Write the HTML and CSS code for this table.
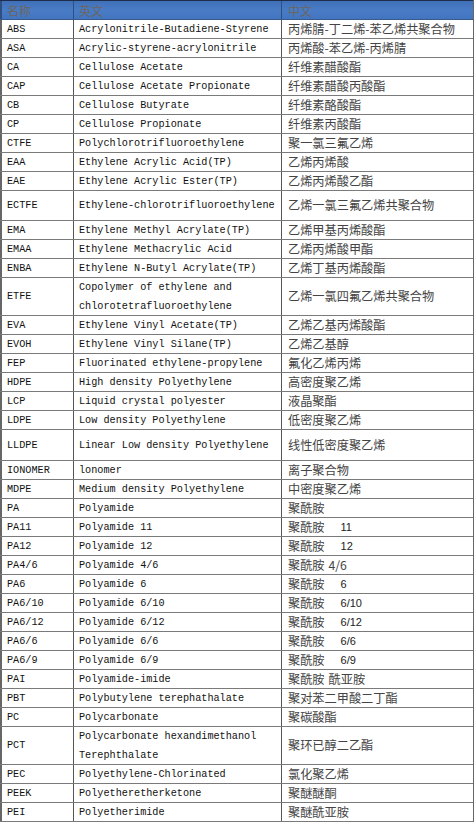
FILE: index.html
```html
<!DOCTYPE html>
<html lang="zh">
<head>
<meta charset="utf-8">
<title>塑料名称对照表</title>
<link rel="stylesheet" href="styles.css">
</head>
<body>
<div class="table">
  <div class="row head"><div class="c c1">名称</div><div class="c c2">英文</div><div class="c c3">中文</div></div>
  <div class="row"><div class="c c1">ABS</div><div class="c c2">Acrylonitrile-Butadiene-Styrene</div><div class="c c3">丙烯腈-丁二烯-苯乙烯共聚合物</div></div>
  <div class="row"><div class="c c1">ASA</div><div class="c c2">Acrylic-styrene-acrylonitrile</div><div class="c c3">丙烯酸-苯乙烯-丙烯腈</div></div>
  <div class="row"><div class="c c1">CA</div><div class="c c2">Cellulose Acetate</div><div class="c c3">纤维素醋酸酯</div></div>
  <div class="row"><div class="c c1">CAP</div><div class="c c2">Cellulose Acetate Propionate</div><div class="c c3">纤维素醋酸丙酸酯</div></div>
  <div class="row"><div class="c c1">CB</div><div class="c c2">Cellulose Butyrate</div><div class="c c3">纤维素酪酸酯</div></div>
  <div class="row"><div class="c c1">CP</div><div class="c c2">Cellulose Propionate</div><div class="c c3">纤维素丙酸酯</div></div>
  <div class="row"><div class="c c1">CTFE</div><div class="c c2">Polychlorotrifluoroethylene</div><div class="c c3">聚一氯三氟乙烯</div></div>
  <div class="row"><div class="c c1">EAA</div><div class="c c2">Ethylene Acrylic Acid(TP)</div><div class="c c3">乙烯丙烯酸</div></div>
  <div class="row"><div class="c c1">EAE</div><div class="c c2">Ethylene Acrylic Ester(TP)</div><div class="c c3">乙烯丙烯酸乙酯</div></div>
  <div class="row h30"><div class="c c1">ECTFE</div><div class="c c2">Ethylene-chlorotrifluoroethylene</div><div class="c c3">乙烯一氯三氟乙烯共聚合物</div></div>
  <div class="row"><div class="c c1">EMA</div><div class="c c2">Ethylene Methyl Acrylate(TP)</div><div class="c c3">乙烯甲基丙烯酸酯</div></div>
  <div class="row"><div class="c c1">EMAA</div><div class="c c2">Ethylene Methacrylic Acid</div><div class="c c3">乙烯丙烯酸甲酯</div></div>
  <div class="row"><div class="c c1">ENBA</div><div class="c c2">Ethylene N-Butyl Acrylate(TP)</div><div class="c c3">乙烯丁基丙烯酸酯</div></div>
  <div class="row h38"><div class="c c1">ETFE</div><div class="c c2">Copolymer of ethylene and<br>chlorotetrafluoroethylene</div><div class="c c3">乙烯一氯四氟乙烯共聚合物</div></div>
  <div class="row"><div class="c c1">EVA</div><div class="c c2">Ethylene Vinyl Acetate(TP)</div><div class="c c3">乙烯乙基丙烯酸酯</div></div>
  <div class="row"><div class="c c1">EVOH</div><div class="c c2">Ethylene Vinyl Silane(TP)</div><div class="c c3">乙烯乙基醇</div></div>
  <div class="row"><div class="c c1">FEP</div><div class="c c2">Fluorinated ethylene-propylene</div><div class="c c3">氟化乙烯丙烯</div></div>
  <div class="row"><div class="c c1">HDPE</div><div class="c c2">High density Polyethylene</div><div class="c c3">高密度聚乙烯</div></div>
  <div class="row"><div class="c c1">LCP</div><div class="c c2">Liquid crystal polyester</div><div class="c c3">液晶聚酯</div></div>
  <div class="row"><div class="c c1">LDPE</div><div class="c c2">Low density Polyethylene</div><div class="c c3">低密度聚乙烯</div></div>
  <div class="row h31"><div class="c c1">LLDPE</div><div class="c c2">Linear Low density Polyethylene</div><div class="c c3">线性低密度聚乙烯</div></div>
  <div class="row"><div class="c c1">IONOMER</div><div class="c c2">lonomer</div><div class="c c3">离子聚合物</div></div>
  <div class="row"><div class="c c1">MDPE</div><div class="c c2">Medium density Polyethylene</div><div class="c c3">中密度聚乙烯</div></div>
  <div class="row"><div class="c c1">PA</div><div class="c c2">Polyamide</div><div class="c c3">聚酰胺</div></div>
  <div class="row"><div class="c c1">PA11</div><div class="c c2">Polyamide 11</div><div class="c c3">聚酰胺<span class="wide">11</span></div></div>
  <div class="row"><div class="c c1">PA12</div><div class="c c2">Polyamide 12</div><div class="c c3">聚酰胺<span class="wide">12</span></div></div>
  <div class="row"><div class="c c1">PA4/6</div><div class="c c2">Polyamide 4/6</div><div class="c c3">聚酰胺<span class="narrow">4/6</span></div></div>
  <div class="row"><div class="c c1">PA6</div><div class="c c2">Polyamide 6</div><div class="c c3">聚酰胺<span class="wide">6</span></div></div>
  <div class="row"><div class="c c1">PA6/10</div><div class="c c2">Polyamide 6/10</div><div class="c c3">聚酰胺<span class="wide">6/10</span></div></div>
  <div class="row"><div class="c c1">PA6/12</div><div class="c c2">Polyamide 6/12</div><div class="c c3">聚酰胺<span class="wide">6/12</span></div></div>
  <div class="row"><div class="c c1">PA6/6</div><div class="c c2">Polyamide 6/6</div><div class="c c3">聚酰胺<span class="wide">6/6</span></div></div>
  <div class="row"><div class="c c1">PA6/9</div><div class="c c2">Polyamide 6/9</div><div class="c c3">聚酰胺<span class="wide">6/9</span></div></div>
  <div class="row"><div class="c c1">PAI</div><div class="c c2">Polyamide-imide</div><div class="c c3">聚酰胺<span class="narrow">酰亚胺</span></div></div>
  <div class="row"><div class="c c1">PBT</div><div class="c c2">Polybutylene terephathalate</div><div class="c c3">聚对苯二甲酸二丁酯</div></div>
  <div class="row"><div class="c c1">PC</div><div class="c c2">Polycarbonate</div><div class="c c3">聚碳酸酯</div></div>
  <div class="row h38"><div class="c c1">PCT</div><div class="c c2">Polycarbonate hexandimethanol<br>Terephthalate</div><div class="c c3">聚环已醇二乙酯</div></div>
  <div class="row"><div class="c c1">PEC</div><div class="c c2">Polyethylene-Chlorinated</div><div class="c c3">氯化聚乙烯</div></div>
  <div class="row"><div class="c c1">PEEK</div><div class="c c2">Polyetheretherketone</div><div class="c c3">聚醚醚酮</div></div>
  <div class="row"><div class="c c1">PEI</div><div class="c c2">Polyetherimide</div><div class="c c3">聚醚酰亚胺</div></div>
</div>
</body>
</html>
```

FILE: styles.css
```css
html, body {
  margin: 0;
  padding: 0;
  background: #ffffff;
}

.table {
  width: 474px;
  box-sizing: border-box;
  border-right: 1px solid #666;
}

.row {
  display: grid;
  grid-template-columns: 73px 208px 1fr;
  height: 19px;
  box-sizing: border-box;
  border-bottom: 1px solid #7a7a7a;
}

.row.h30 { height: 30px; }
.row.h31 { height: 31px; }
.row.h38 { height: 38px; }

.c {
  display: flex;
  flex-direction: column;
  justify-content: center;
  align-items: flex-start;
  box-sizing: border-box;
  border-left: 1px solid #555;
  line-height: 19px;
  white-space: nowrap;
  overflow: hidden;
}

.c1 {
  border-left: 2px solid #666;
  padding-left: 5px;
  font-family: "Liberation Mono", "DejaVu Sans Mono", monospace;
  font-size: 10.2px;
  color: #111;
}

.c2 {
  padding-left: 5px;
  font-family: "Liberation Mono", "DejaVu Sans Mono", monospace;
  font-size: 10.2px;
  color: #111;
}

.c3 {
  flex-direction: row;
  justify-content: flex-start;
  align-items: center;
  padding-left: 6px;
  font-family: "Noto Sans CJK SC", "Noto Sans", sans-serif;
  font-size: 12.2px;
  color: #444;
}

.wide {
  margin-left: 16px;
  font-family: "Liberation Sans", "Noto Sans", sans-serif;
  font-size: 11px;
  color: #222;
}

.narrow {
  margin-left: 4px;
}

.row.head {
  height: 20px;
  border-top: 1px solid #1d2d4a;
  border-bottom: 1px solid #3a5a8a;
  background: linear-gradient(#3f70b8, #4a7cc6 50%, #4275c0);
}

.head .c {
  flex-direction: row;
  justify-content: flex-start;
  align-items: center;
  font-family: "Noto Sans CJK SC", "Noto Sans", sans-serif;
  font-size: 12px;
  color: #6a6560;
  border-left-color: #2e4f80;
}

.head .c1 {
  border-left: 2px solid #2e4f80;
}
```
